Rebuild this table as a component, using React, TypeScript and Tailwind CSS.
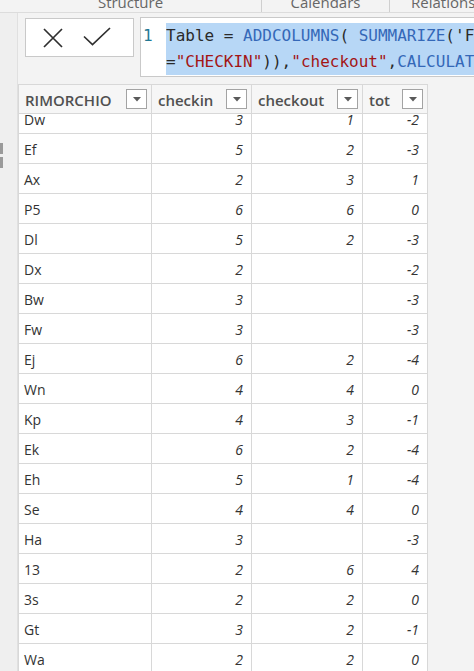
import React from "react";

type Row = [string, string, string, string];

const rows: Row[] = [
  ["Dw", "3", "1", "-2"],
  ["Ef", "5", "2", "-3"],
  ["Ax", "2", "3", "1"],
  ["P5", "6", "6", "0"],
  ["Dl", "5", "2", "-3"],
  ["Dx", "2", "", "-2"],
  ["Bw", "3", "", "-3"],
  ["Fw", "3", "", "-3"],
  ["Ej", "6", "2", "-4"],
  ["Wn", "4", "4", "0"],
  ["Kp", "4", "3", "-1"],
  ["Ek", "6", "2", "-4"],
  ["Eh", "5", "1", "-4"],
  ["Se", "4", "4", "0"],
  ["Ha", "3", "", "-3"],
  ["13", "2", "6", "4"],
  ["3s", "2", "2", "0"],
  ["Gt", "3", "2", "-1"],
  ["Wa", "2", "2", "0"],
];

function DropBox() {
  return (
    <div className="w-[21px] h-[20px] shrink-0 border border-[#a3a3a3] bg-white flex items-center justify-center">
      <svg width="8" height="5" viewBox="0 0 8 5">
        <path d="M0 0 L8 0 L4 4.5 Z" fill="#5a5a5a" />
      </svg>
    </div>
  );
}

function HeaderCell({ label }: { label: string }) {
  return (
    <div className="h-[29px] border-r border-b border-[#d8d8d8] bg-[#f6f6f6] flex items-center justify-between pl-[6px] pr-[4px]">
      <span className="text-[15px] font-semibold text-[#505050] leading-[28px] pt-[1px]">{label}</span>
      <DropBox />
    </div>
  );
}

const blue = "text-[#3468b8]";
const red = "text-[#a31515]";
const dark = "text-[#2a2a2a]";

export default function App() {
  return (
    <div
      className="w-[474px] h-[671px] overflow-hidden bg-[#f3f3f3] flex flex-col"
      style={{ fontFamily: "'Open Sans', 'Noto Sans', sans-serif" }}
    >
      {/* tab strip */}
      <div className="h-[13px] shrink-0 flex border-b border-[#dcdcdc] overflow-hidden text-[15px] text-[#666]">
        <div className="w-[262px] shrink-0 flex justify-center border-r border-[#cfcfcf]">
          <span className="-mt-[8px] leading-[20px]">Structure</span>
        </div>
        <div className="w-[128px] shrink-0 flex justify-center border-r border-[#cfcfcf]">
          <span className="-mt-[8px] leading-[20px]">Calendars</span>
        </div>
        <div className="pl-[21px] whitespace-nowrap">
          <span className="-mt-[8px] leading-[20px] block">Relationships</span>
        </div>
      </div>

      <div className="flex flex-1 min-h-0">
        {/* left strip */}
        <div className="w-[18px] shrink-0 bg-[#efefef] border-r border-[#e0e0e0] flex flex-col items-start">
          <div className="mt-[130px] w-[3px] h-[11px] bg-[#9a9a9a]" />
          <div className="mt-[3px] w-[3px] h-[11px] bg-[#9a9a9a]" />
        </div>

        {/* main */}
        <div className="flex-1 min-w-0 flex flex-col">
          {/* formula bar */}
          <div className="h-[71px] shrink-0 flex items-start">
            <div className="ml-[7px] mt-[5px] w-[109px] h-[39px] shrink-0 bg-white border border-[#c9c9c9] flex items-center pl-[17px]">
              <svg width="20" height="20" viewBox="0 0 20 20">
                <path d="M1 1 L19 19 M19 1 L1 19" stroke="#2f2f2f" strokeWidth="1.7" fill="none" />
              </svg>
              <svg className="ml-[20px] -mt-[2px]" width="28" height="19" viewBox="0 0 28 19">
                <path d="M1 9.5 L9.5 17.5 L27 1" stroke="#2f2f2f" strokeWidth="1.7" fill="none" />
              </svg>
            </div>
            <div className="ml-[6px] mt-[4px] h-[60px] flex-1 min-w-0 bg-white border-l border-t border-b border-[#c9c9c9] flex overflow-hidden">
              <div
                className="w-[25px] shrink-0 pl-[2px] pt-[5px] text-[16px] leading-[26px] text-[#237893]"
                style={{ fontFamily: "'DejaVu Sans Mono', monospace" }}
              >
                1
              </div>
              <div
                className="flex-1 min-w-0 pt-[5px] text-[16px] leading-[26px] whitespace-nowrap overflow-hidden"
                style={{ fontFamily: "'DejaVu Sans Mono', monospace" }}
              >
                <div className="h-[26px] bg-[#b7d7f6]">
                  <span className={dark}>Table = </span>
                  <span className={blue}>ADDCOLUMNS</span>
                  <span className={dark}>( </span>
                  <span className={blue}>SUMMARIZE</span>
                  <span className={dark}>('Foglio1','Foglio1'[RIMORCHIO]),</span>
                  <span className={red}>"checkin"</span>
                </div>
                <div className="h-[26px] bg-[#b7d7f6]">
                  <span className={dark}>=</span>
                  <span className={red}>"CHECKIN"</span>
                  <span className={dark}>)),</span>
                  <span className={red}>"checkout"</span>
                  <span className={dark}>,</span>
                  <span className={blue}>CALCULATE</span>
                  <span className={dark}>(</span>
                </div>
              </div>
            </div>
          </div>

          {/* table */}
          <div className="flex-1 min-h-0 flex flex-col w-[410px] border-l border-t border-[#d8d8d8]">
            <div className="grid grid-cols-[133px_100px_111px_65px] shrink-0">
              <HeaderCell label="RIMORCHIO" />
              <HeaderCell label="checkin" />
              <HeaderCell label="checkout" />
              <HeaderCell label="tot" />
            </div>
            <div className="flex-1 min-h-0 overflow-hidden bg-white">
              <div className="-mt-[10px] grid grid-cols-[133px_100px_111px_65px] text-[14px] text-[#333]">
                {rows.map((r, i) => (
                  <React.Fragment key={i}>
                    <div className="h-[30px] border-r border-b border-[#d8d8d8] pl-[5px] pt-[2px] leading-[27px]">
                      {r[0]}
                    </div>
                    <div className="h-[30px] border-r border-b border-[#d8d8d8] pr-[8px] pt-[2px] leading-[27px] text-right italic">
                      {r[1]}
                    </div>
                    <div className="h-[30px] border-r border-b border-[#d8d8d8] pr-[8px] pt-[2px] leading-[27px] text-right italic">
                      {r[2]}
                    </div>
                    <div className="h-[30px] border-r border-b border-[#d8d8d8] pr-[8px] pt-[2px] leading-[27px] text-right italic">
                      {r[3]}
                    </div>
                  </React.Fragment>
                ))}
              </div>
            </div>
          </div>
        </div>
      </div>
    </div>
  );
}
